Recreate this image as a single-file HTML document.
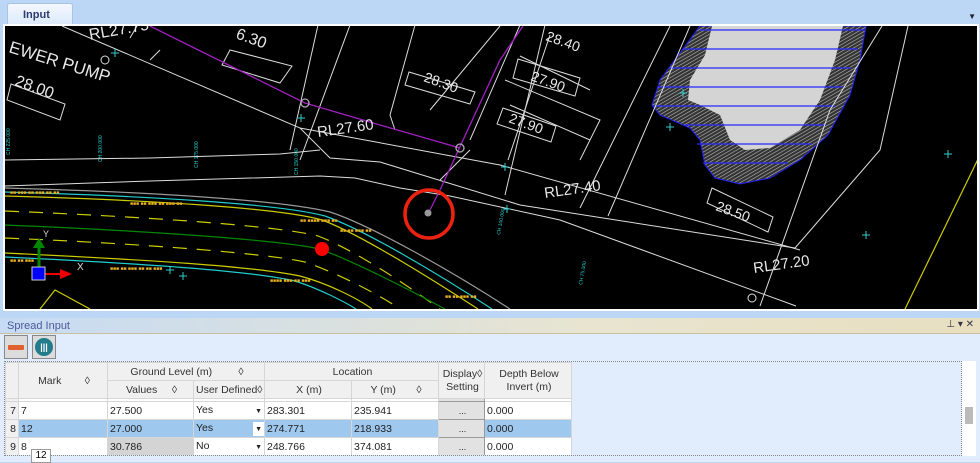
<!DOCTYPE html>
<html><head><meta charset="utf-8"><style>
*{box-sizing:border-box;margin:0;padding:0}
body{width:980px;height:462px;overflow:hidden;background:#bcd6f6;font-family:"Liberation Sans",sans-serif;position:relative}
.abs{position:absolute}
.tab{left:7px;top:3px;width:66px;height:23px;background:linear-gradient(#f4f8fe,#dbe8fa);border:1px solid #a9c4e8;border-bottom:none;border-radius:3px 3px 0 0;font-size:11px;font-weight:bold;color:#2b3b6e;padding:5px 0 0 15px}
#canvas{left:3px;top:24px;width:976px;height:287px;border:2px solid #fff;background:#000}
.hdr{left:0;top:318px;width:980px;height:16px;background:linear-gradient(90deg,#c6dbf4,#e8e4d0 60%,#e8dfc0);font-size:11px;color:#4a5a9a;padding:2px 0 0 7px;border-bottom:1px solid #c9c0a0}
.tb{left:0;top:334px;width:980px;height:128px;background:#e1edfc}
.btn{width:24px;height:24px;border:1px solid #888;background:#dcdcdc}
table{border-collapse:collapse;font-size:10.5px;color:#222}
td{border:1px solid #d6d6d6;height:18px;line-height:12px;padding:0 0 0 2px;white-space:nowrap;overflow:hidden;background:#fff}
.h td{background:#f0f0f0;text-align:center;color:#333}
.sel td{background:#9fc8ee}
.rh{background:#f0f0f0!important;text-align:right;padding-right:2px}
.dots{background:#e2e2e2!important;border:1px solid #999;text-align:center;font-size:9px}
tr.part td{height:3px;font-size:0;line-height:0}
</style></head><body>
<div class="abs tab">Input</div>
<div class="abs" style="right:4px;top:12px;font-size:8px;color:#223">▼</div>
<div class="abs" id="canvas">
<svg width="972" height="283" viewBox="5 26 972 283" xmlns="http://www.w3.org/2000/svg" font-family="Liberation Sans">
<defs><pattern id="hp" width="3" height="3" patternUnits="userSpaceOnUse" patternTransform="rotate(60)"><rect width="3" height="3" fill="#333"/><line x1="0" y1="0" x2="0" y2="3" stroke="#bbb" stroke-width="1.2"/></pattern></defs>
<rect x="0" y="0" width="980" height="320" fill="#000"/>
<path d="M700,26 L866,26 L860,60 L850,95 L828,135 L800,160 L770,178 L740,184 L715,178 L705,165 L700,140 L690,128 L660,115 L652,105 L660,80 Z" fill="url(#hp)" stroke="#2020ff" stroke-width="1"/>
<path d="M712,26 L843,26 L835,60 L820,100 L800,130 L770,148 L745,150 L730,140 L720,115 L700,105 L688,100 L690,80 L705,55 Z" fill="#d4d4d4"/>
<g stroke="#2828ff" stroke-width="1.3">
<line x1="700" y1="30" x2="864" y2="30"/><line x1="683" y1="49" x2="858" y2="49"/><line x1="670" y1="68" x2="851" y2="68"/><line x1="658" y1="87" x2="843" y2="87"/><line x1="653" y1="106" x2="835" y2="106"/><line x1="685" y1="125" x2="826" y2="125"/><line x1="697" y1="144" x2="812" y2="144"/><line x1="703" y1="163" x2="788" y2="163"/></g>
<g stroke="#ddd" stroke-width="1" fill="none">
<path d="M62,26 L300,128 L330,158 L380,162 L520,205 L795,248"/>
<path d="M5,186 L150,181 L320,176 L355,178 L400,188 L450,196 L560,220 L796,306"/>
<path d="M5,160 L150,158 L280,154 L320,150"/>
<path d="M300,128 L500,165 L800,250"/>
<path d="M130,38 L137,26 M160,50 L150,60"/>
<path d="M318,25 L290,150 M350,25 L300,160 M415,25 L390,115 L395,130 M430,110 L500,26 M470,140 L520,25 M440,180 L470,150 M505,195 L545,25 M580,208 L670,26 M608,216 L690,26 M760,306 L830,110 L882,26 M795,248 L880,150 L908,26"/>
<path d="M508,160 L550,35 M505,80 L600,120 L580,160 M510,105 L590,140 M520,56 L590,90"/>
<path d="M230,50 L292,66 L280,83 L222,65 Z M11,84 L65,104 L60,120 L7,100 Z"/>
<path d="M409,72 L475,92 L470,104 L405,85 Z M518,59 L580,78 L575,96 L513,78 Z M503,108 L556,126 L551,142 L497,124 Z M712,188 L773,217 L768,232 L707,203 Z"/>
<circle cx="105" cy="60" r="4"/><circle cx="752" cy="298" r="4"/>
</g>
<g stroke="#a020c0" stroke-width="1.3" fill="none">
<path d="M150,26 L305,103 L380,125 L460,148"/>
<path d="M523,26 L500,60 L440,190 L430,210"/>
<circle cx="305" cy="103" r="4" stroke="#aaa"/><circle cx="460" cy="148" r="4" stroke="#aaa"/>
</g>
<g fill="none" stroke-width="1.2">
<path d="M5,188 C150,192 280,200 330,212 C370,225 450,270 510,309" stroke="#999"/>
<path d="M5,192 C150,196 280,204 325,216 C365,230 440,275 492,309" stroke="#2cc"/>
<path d="M5,196 C150,200 280,208 322,220 C360,234 430,278 478,309" stroke="#cc0"/>
<path d="M5,211 C150,217 280,226 318,236 C350,248 400,280 440,309" stroke="#cc0" stroke-dasharray="14,10"/>
<path d="M5,225 C150,231 280,240 320,249 C355,262 410,290 445,309" stroke="#080"/>
<path d="M5,238 C150,244 270,254 305,262 C335,272 380,295 400,309" stroke="#cc0" stroke-dasharray="14,10"/>
<path d="M5,253 C150,260 250,266 300,276 C330,284 360,300 372,309" stroke="#cc0"/>
<path d="M5,257 C150,264 250,271 295,281 C320,289 345,302 356,309" stroke="#2cc"/>
<path d="M40,309 L55,290 L90,309" stroke="#cc0"/>
<path d="M980,155 L905,309" stroke="#cc0"/>
</g>
<g fill="#e8b020" font-size="5">
<text x="10" y="194">■■ ■■■ ■■ ■■■ ■■ ■■</text><text x="130" y="205">■■■ ■■ ■■■ ■■ ■■■ ■■</text>
<text x="300" y="222">■■ ■■■■ ■■■ ■■</text><text x="340" y="232">■■ ■■ ■■■ ■■</text>
<text x="10" y="262">■■ ■■ ■■■</text><text x="110" y="270">■■■ ■■ ■■■ ■■ ■■ ■■■</text>
<text x="270" y="282">■■■■ ■■■ ■■ ■■■</text><text x="445" y="298">■■ ■■ ■■■ ■■</text></g>
<circle cx="322" cy="249" r="7" fill="#f00"/>
<circle cx="429" cy="214" r="24" fill="none" stroke="#e21" stroke-width="3.5"/>
<circle cx="428" cy="213" r="3.5" fill="#999"/>
<line x1="39" y1="268" x2="39" y2="245" stroke="#080" stroke-width="3"/><polygon points="33,248 45,248 39,238" fill="#080"/>
<line x1="40" y1="274" x2="62" y2="274" stroke="#e00" stroke-width="2"/><polygon points="60,269 72,274 60,279" fill="#e00"/>
<rect x="32" y="267" width="13" height="13" fill="#00f" stroke="#ccc"/>
<text x="43" y="237" fill="#ddd" font-size="9">Y</text><text x="77" y="270" fill="#ddd" font-size="10">X</text>
<g stroke="#3cc" stroke-width="1"><path d="M115,49 v8 M111,53 h8 M301,114 v8 M297,118 h8 M505,163 v8 M501,167 h8 M507,205 v8 M503,209 h8 M683,89 v8 M679,93 h8 M670,123 v8 M666,127 h8 M948,150 v8 M944,154 h8 M866,231 v8 M862,235 h8 M183,272 v8 M179,276 h8 M170,266 v8 M166,270 h8"/></g>
<g fill="#e8e8e8" font-size="17">
<text transform="translate(8,52) rotate(17)">EWER PUMP</text>
<text transform="translate(14,85) rotate(20)" font-size="16">28.00</text>
<text transform="translate(90,40) rotate(-10)" font-size="16">RL27.75</text>
<text transform="translate(235,38) rotate(20)" font-size="16">6.30</text>
<text transform="translate(318,137) rotate(-8)" font-size="15">RL27.60</text>
<text transform="translate(423,81) rotate(20)" font-size="14">28.30</text>
<text transform="translate(530,80) rotate(20)" font-size="14">27.90</text>
<text transform="translate(508,122) rotate(20)" font-size="14">27.90</text>
<text transform="translate(545,40) rotate(20)" font-size="14">28.40</text>
<text transform="translate(545,198) rotate(-8)" font-size="15">RL27.40</text>
<text transform="translate(715,210) rotate(20)" font-size="14">28.50</text>
<text transform="translate(754,273) rotate(-8)" font-size="15">RL27.20</text>
</g>
<g fill="#2cc" font-size="5"><text transform="translate(10,155) rotate(-90)">CH 225.000</text><text transform="translate(102,162) rotate(-90)">CH 200.000</text><text transform="translate(198,168) rotate(-90)">CH 175.000</text><text transform="translate(298,175) rotate(-90)">CH 150.000</text><text transform="translate(500,235) rotate(-80)">CH 100.000</text><text transform="translate(582,285) rotate(-80)">CH 75.000</text></g>
</svg>
</div>
<div class="abs hdr">Spread Input</div>
<div class="abs" style="right:6px;top:319px;font-size:10px;color:#334">⊥ ▾ ✕</div>
<div class="abs tb"></div>
<div class="abs btn" style="left:4px;top:335px"><div style="margin:9px 3px;width:16px;height:5px;background:#e06030;border-radius:1px"></div></div>
<div class="abs btn" style="left:32px;top:335px"><div style="margin:2px;width:18px;height:18px;border-radius:50%;background:#237c8c;color:#fff;font-size:9px;text-align:center;line-height:18px;font-weight:bold">|||</div></div>
<div class="abs" style="left:4px;top:361px;width:958px;height:95px;border:1px dotted #888;overflow:hidden">
<table style="width:566px;table-layout:fixed">
<col style="width:13px"><col style="width:89px"><col style="width:86px"><col style="width:71px"><col style="width:87px"><col style="width:87px"><col style="width:46px"><col style="width:87px">
<tr class="h"><td rowspan="2" class="rh"></td><td rowspan="2">Mark &nbsp; &nbsp; &nbsp; &nbsp;◊</td><td colspan="2" style="height:18px">Ground Level (m) &nbsp; &nbsp; &nbsp; &nbsp; ◊</td><td colspan="2">Location</td><td rowspan="2" style="line-height:13px">Display◊<br>Setting</td><td rowspan="2" style="line-height:13px">Depth Below<br>Invert (m)</td></tr>
<tr class="h"><td style="height:17px">Values &nbsp; &nbsp; ◊</td><td style="text-align:left">User Defined◊</td><td>X (m)</td><td>Y (m) &nbsp; &nbsp; &nbsp; ◊</td></tr>
<tr class="part"><td class="rh"></td><td></td><td></td><td></td><td></td><td></td><td class="dots"></td><td></td></tr>
<tr><td class="rh">7</td><td>7</td><td>27.500</td><td>Yes <span style="float:right;font-size:7px;padding:2px 2px 0">▼</span></td><td>283.301</td><td>235.941</td><td class="dots">...</td><td>0.000</td></tr>
<tr class="sel"><td class="rh">8</td><td>12</td><td>27.000</td><td>Yes <span style="float:right;font-size:7px;padding:2px 2px 0;background:#fff">▼</span></td><td>274.771</td><td>218.933</td><td class="dots">...</td><td>0.000</td></tr>
<tr><td class="rh">9</td><td>8</td><td style="background:#d4d4d4">30.786</td><td>No <span style="float:right;font-size:7px;padding:2px 2px 0">▼</span></td><td>248.766</td><td>374.081</td><td class="dots">...</td><td>0.000</td></tr>
</table></div>
<div class="abs" style="left:31px;top:449px;width:20px;height:14px;border:1px solid #999;background:#fff;font-size:10px;text-align:center">12</div>
<div class="abs" style="left:962px;top:361px;width:14px;height:95px;background:#fff"><div style="margin:46px 3px 0;width:8px;height:17px;background:#bbb"></div></div>
</body></html>
